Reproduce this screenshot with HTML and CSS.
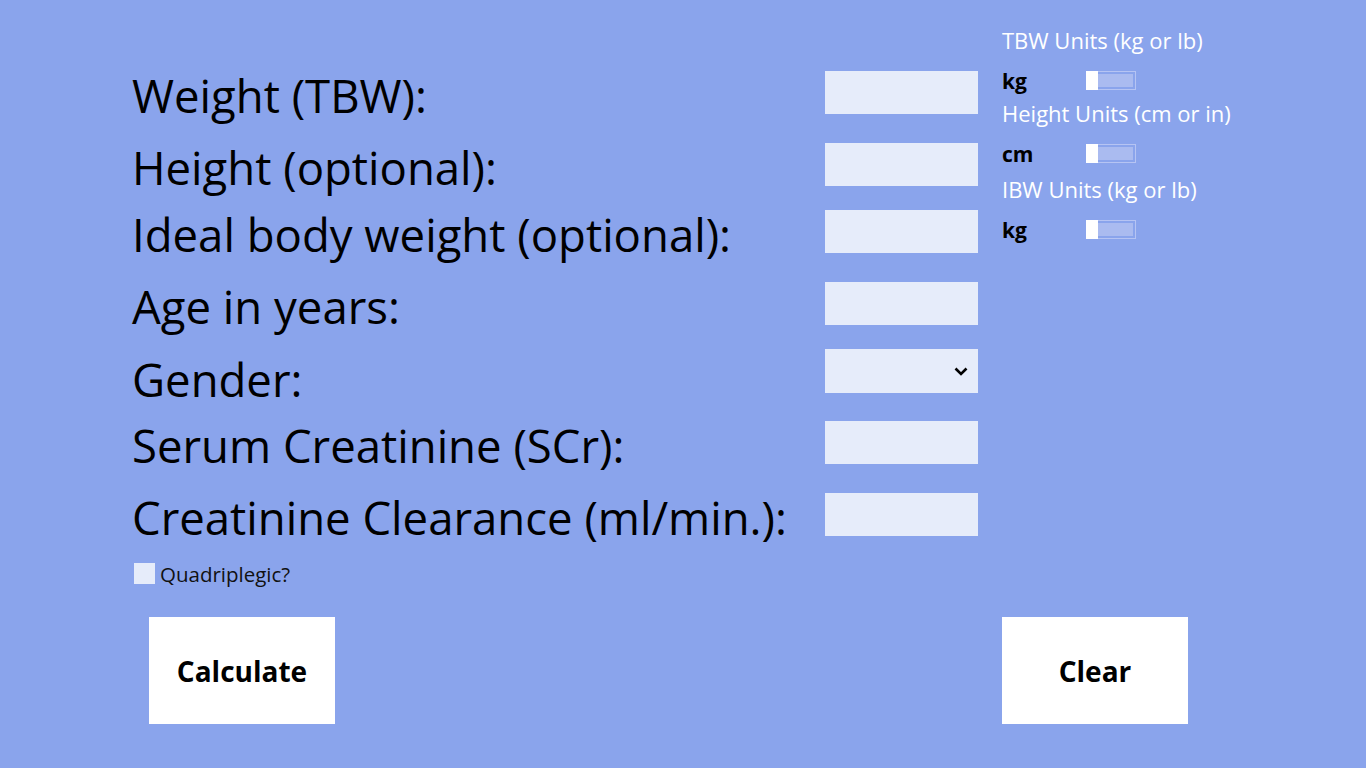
FILE: index.html
```html
<!DOCTYPE html>
<html lang="en">
<head>
<meta charset="utf-8">
<title>Creatinine Clearance</title>
<link rel="stylesheet" href="styles.css">
</head>
<body>
<div class="page">
  <div class="top">
    <div class="form">
      <div class="row r72"><span class="label">Weight (TBW):</span><input class="field" type="text"></div>
      <div class="row r67"><span class="label">Height (optional):</span><input class="field" type="text"></div>
      <div class="row r72"><span class="label">Ideal body weight (optional):</span><input class="field" type="text"></div>
      <div class="row r67"><span class="label">Age in years:</span><input class="field" type="text"></div>
      <div class="row r72"><span class="label label-low">Gender:</span>
        <div class="select-wrap">
          <select class="field select"><option></option></select>
          <svg class="chev" width="14" height="9" viewBox="0 0 14 9"><path d="M1.5 1.5 L7 7 L12.5 1.5" fill="none" stroke="#000" stroke-width="2.6"/></svg>
        </div>
      </div>
      <div class="row r72"><span class="label">Serum Creatinine (SCr):</span><input class="field" type="text"></div>
      <div class="row rlast"><span class="label">Creatinine Clearance (ml/min.):</span><input class="field" type="text"></div>
      <label class="check"><span class="box"></span><span class="check-text">Quadriplegic?</span></label>
    </div>
    <div class="units">
      <div class="uhead h1">TBW Units (kg or lb)</div>
      <div class="urow"><span class="uval">kg</span><span class="toggle"><span class="thumb"></span><span class="track"><span class="fill"></span></span></span></div>
      <div class="uhead h2">Height Units (cm or in)</div>
      <div class="urow"><span class="uval">cm</span><span class="toggle"><span class="thumb"></span><span class="track"><span class="fill"></span></span></span></div>
      <div class="uhead h3">IBW Units (kg or lb)</div>
      <div class="urow"><span class="uval">kg</span><span class="toggle"><span class="thumb"></span><span class="track"><span class="fill"></span></span></span></div>
    </div>
  </div>
  <div class="actions">
    <button class="btn calc">Calculate</button>
    <button class="btn clear">Clear</button>
  </div>
</div>
</body>
</html>
```

FILE: styles.css
```css
html, body {
  margin: 0;
  padding: 0;
  height: 100%;
}
body {
  background: #8aa4ec;
  font-family: "Open Sans", "Noto Sans", sans-serif;
  color: #000;
  overflow: hidden;
}
.page {
  width: 1366px;
  height: 768px;
}
.top {
  display: flex;
  align-items: flex-start;
}
.form {
  padding-top: 71px;
  padding-left: 132px;
  width: 846px;
}
.row {
  display: flex;
  align-items: flex-start;
  justify-content: space-between;
}
.r72 { height: 72px; }
.r67 { height: 67px; }
.rlast { height: 43px; }
.label {
  font-size: 45.5px;
  line-height: 49px;
  white-space: nowrap;
}
.label-low {
  margin-top: 6px;
}
.field {
  width: 153px;
  height: 43px;
  box-sizing: border-box;
  border: none;
  background: #e6ecfa;
  margin: 0;
  padding: 0;
  outline: none;
  border-radius: 0;
}
.select-wrap {
  position: relative;
  width: 153px;
  height: 44px;
}
.select {
  height: 44px;
  appearance: none;
  -webkit-appearance: none;
}
.chev {
  position: absolute;
  left: 129px;
  top: 18px;
}
.check {
  display: flex;
  align-items: center;
  margin-top: 27px;
  margin-left: 2px;
  height: 21px;
}
.box {
  width: 21px;
  height: 21px;
  background: #e6ecfa;
}
.check-text {
  margin-left: 5px;
  font-size: 20.5px;
  color: #111;
}
.units {
  margin-left: 24px;
  padding-top: 26px;
  color: #fff;
}
.uhead {
  font-size: 22px;
  line-height: 28px;
  white-space: nowrap;
}
.h2 { margin-top: 9px; }
.h3 { margin-top: 12px; }
.urow {
  display: flex;
  align-items: center;
  height: 19px;
  margin-top: 17px;
}
.uval {
  width: 84px;
  font-size: 21px;
  font-weight: 700;
  color: #000;
}
.toggle {
  display: flex;
  height: 19px;
  width: 50px;
}
.thumb {
  width: 12px;
  height: 19px;
  background: #fff;
}
.track {
  flex: 1;
  box-sizing: border-box;
  border: 1px solid #b6c4f3;
  border-left: none;
  padding: 2px 2px 2px 0;
  display: flex;
}
.fill {
  flex: 1;
  background: #aabbf0;
}
.actions {
  display: flex;
  margin-top: 33px;
  padding-left: 149px;
}
.btn {
  width: 186px;
  height: 107px;
  background: #fff;
  border: none;
  font-family: "Open Sans", "Noto Sans", sans-serif;
  font-size: 28px;
  font-weight: 700;
  color: #000;
  padding: 0;
}
.clear {
  margin-left: 667px;
}
```
